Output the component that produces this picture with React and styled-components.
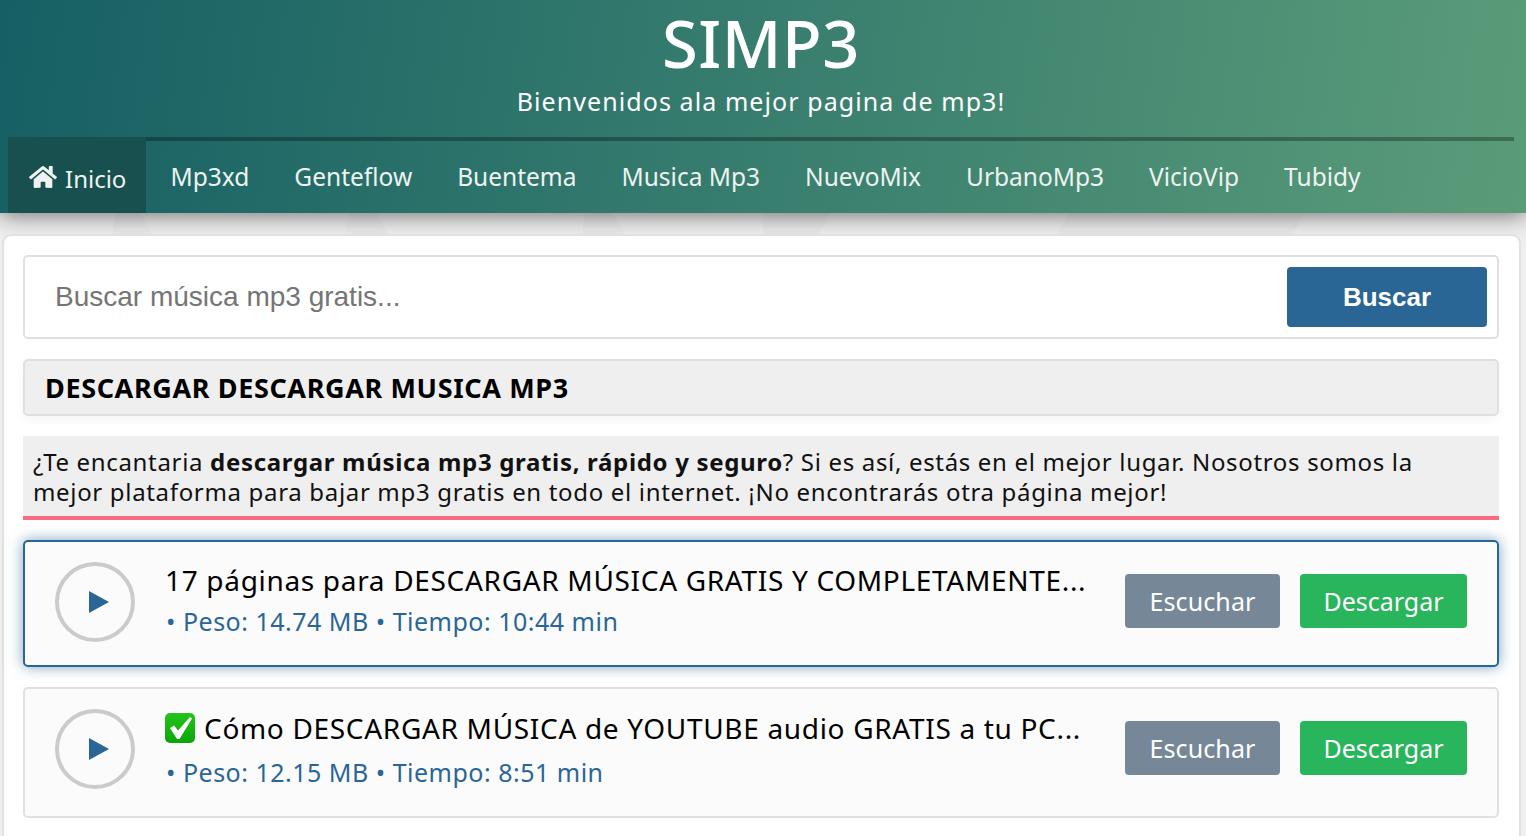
import React from 'react';
import styled, { createGlobalStyle } from 'styled-components';
import { FaHome } from 'react-icons/fa';

const GlobalStyle = createGlobalStyle`
  html, body {
    margin: 0;
    height: 836px;
    overflow: hidden;
    background: #efefef;
  }
  * { box-sizing: border-box; }
`;

const Header = styled.header`
  height: 213px;
  padding: 12px 12px 0 8px;
  background: linear-gradient(98deg, #165f64 0%, #5a9c79 100%);
  box-shadow: 0 2px 22px rgba(0, 0, 0, .55);
  position: relative;
  z-index: 0;
  font-family: "Noto Sans", sans-serif;
  color: #fff;
`;

const Logo = styled.h1`
  margin: 0;
  height: 62px;
  line-height: 62px;
  text-align: center;
  font-size: 65px;
  font-weight: 500;
  letter-spacing: .5px;
  font-family: "Noto Sans", sans-serif;
`;

const Tagline = styled.p`
  margin: 0;
  height: 63px;
  line-height: 32px;
  padding-top: 11px;
  text-align: center;
  font-size: 25px;
  letter-spacing: 1.08px;
`;

const Nav = styled.nav`
  display: flex;
  height: 76px;
  border-top: 4px solid rgba(0, 0, 0, .3);
`;

const NavItem = styled.a`
  display: flex;
  align-items: center;
  padding: 0 22.5px;
  font-size: 24.5px;
  line-height: 34px;
  color: #eef3f1;
`;

const ActiveItem = styled(NavItem)`
  gap: 8px;
  width: 138px;
  margin: -4px 2px 0 0;
  padding: 4px 0 0 21px;
  background: #17504f;
  font-size: 24px;
`;

const ActiveLabel = styled.span`
  padding-top: 3px;
`;

// faint hexagon tiles of the page background, only seen in the strip under the header
const Tiles = styled.svg`
  position: absolute;
  top: 213px;
  left: 0;
  z-index: 0;
`;

const Main = styled.main`
  position: relative;
  z-index: 1;
  margin: 21px 5px 0 2px;
  padding: 19px 20px 0 19px;
  height: 700px;
  background: #fff;
  border: 2px solid #e1e1e1;
  border-radius: 9px;
`;

const SearchBox = styled.form`
  display: flex;
  align-items: center;
  justify-content: space-between;
  height: 84px;
  padding: 0 10px 0 30px;
  border: 2px solid #e0e0e0;
  border-radius: 5px;
`;

const Placeholder = styled.span`
  font-family: "Liberation Sans", sans-serif;
  font-size: 28px;
  color: #757575;
`;

const SearchButton = styled.button`
  width: 200px;
  height: 60px;
  border: 0;
  border-radius: 4px;
  background: #2a6695;
  color: #fff;
  font-family: "Liberation Sans", sans-serif;
  font-size: 26px;
  font-weight: 700;
`;

const Title = styled.h2`
  display: flex;
  align-items: center;
  height: 57px;
  margin: 20px 0;
  padding-left: 20px;
  border: 2px solid #e0e0e0;
  border-radius: 5px;
  background: #efefef;
  box-shadow: 0 4px 10px rgba(0, 0, 0, .04);
  color: #000;
  font-family: "Noto Sans", sans-serif;
  font-size: 27px;
  font-weight: 700;
  letter-spacing: .63px;
`;

const Intro = styled.p`
  margin: 0 0 20px;
  height: 84px;
  padding: 11px 60px 0 10px;
  background: #efefef;
  border-bottom: 4px solid #fb6b7e;
  color: #111;
  font-family: "Noto Sans", sans-serif;
  font-size: 24px;
  letter-spacing: .67px;
  line-height: 30px;
`;

const Card = styled.article`
  display: flex;
  align-items: center;
  height: ${p => (p.$active ? '127px' : '131px')};
  margin-bottom: 20px;
  padding: 0 30px ${p => (p.$active ? '6px' : '9px')};
  background: #fbfbfb;
  border: 2px solid ${p => (p.$active ? '#2a6695' : '#e0e0e0')};
  border-radius: 5px;
  box-shadow: ${p => (p.$active ? '0 0 14px rgba(42, 102, 149, .6)' : 'none')};
  font-family: "Noto Sans", sans-serif;
`;

const PlayButton = styled.div`
  flex: none;
  display: flex;
  align-items: center;
  justify-content: center;
  width: 80px;
  height: 80px;
  padding-left: 8px;
  border: 4px solid #cbcbcb;
  border-radius: 50%;
  margin: 2px 31px 0 0;
`;

const Info = styled.div`
  flex: 1;
  min-width: 0;
  padding: ${p => (p.$check ? '2px 0 0' : '0 0 3px')};
`;

const SongTitle = styled.div`
  display: flex;
  align-items: center;
  gap: 9px;
  margin-left: -1px;
  font-size: 28px;
  letter-spacing: .68px;
  line-height: 36px;
  color: #000;
`;

const TitleText = styled.span`
  flex: 1;
  min-width: 0;
  white-space: nowrap;
`;

const Meta = styled.div`
  margin-top: ${p => (p.$check ? '10px' : '7px')};
  font-size: 25px;
  letter-spacing: .5px;
  line-height: 32px;
  color: #2a6695;
`;

const Actions = styled.div`
  flex: none;
  display: flex;
  gap: 20px;
  margin-left: 38px;
`;

const ActionButton = styled.button`
  height: 54px;
  width: ${p => (p.$green ? '167px' : '155px')};
  border: 0;
  border-radius: 4px;
  background: ${p => (p.$green ? '#29b55c' : '#768898')};
  color: #fff;
  font-family: "Noto Sans", sans-serif;
  font-size: 25px;
  letter-spacing: ${p => (p.$green ? '0' : '.1px')};
`;

const navLinks = ['Mp3xd', 'Genteflow', 'Buentema', 'Musica Mp3', 'NuevoMix', 'UrbanoMp3', 'VicioVip', 'Tubidy'];

const PlayIcon = () => (
  <svg width="20" height="22" viewBox="0 0 20 22">
    <path d="M0 0 L20 11 L0 22 Z" fill="#2a6695" />
  </svg>
);

const CheckIcon = () => (
  <svg width="30" height="30" viewBox="0 0 30 30">
    <defs>
      <linearGradient id="checkFill" x1="0" y1="0" x2="0" y2="1">
        <stop offset="0" stopColor="#25c41c" />
        <stop offset="1" stopColor="#0ba50a" />
      </linearGradient>
    </defs>
    <rect width="30" height="30" rx="5" fill="url(#checkFill)" />
    <path d="M5 15 L9 12.5 L13 17.5 L25 4 L27 5.5 L14.5 26 L12 26 Z" fill="#fff" />
  </svg>
);

const songs = [
  { title: '17 páginas para DESCARGAR MÚSICA GRATIS Y COMPLETAMENTE...', meta: '• Peso: 14.74 MB • Tiempo: 10:44 min', active: true },
  { title: 'Cómo DESCARGAR MÚSICA de YOUTUBE audio GRATIS a tu PC...', meta: '• Peso: 12.15 MB • Tiempo: 8:51 min', check: true },
];

export default function App() {
  return (
    <>
      <GlobalStyle />
      <Tiles width="1526" height="21" viewBox="0 213 1526 21">
        <g fill="rgba(0,0,0,.02)">
          <polygon points="115,213 141,213 152,234 112,234" />
          <polygon points="350,213 377,213 388,234 345,234" />
          <polygon points="585,213 613,213 625,234 582,234" />
          <polygon points="763,213 831,213 819,234 763,234" />
          <polygon points="1069,213 1305,213 1293,234 1057,234" />
        </g>
      </Tiles>
      <Header>
        <Logo>SIMP3</Logo>
        <Tagline>Bienvenidos ala mejor pagina de mp3!</Tagline>
        <Nav>
          <ActiveItem><FaHome size={28} /><ActiveLabel>Inicio</ActiveLabel></ActiveItem>
          {navLinks.map(l => <NavItem key={l}>{l}</NavItem>)}
        </Nav>
      </Header>
      <Main>
        <SearchBox>
          <Placeholder>Buscar música mp3 gratis...</Placeholder>
          <SearchButton type="button">Buscar</SearchButton>
        </SearchBox>
        <Title>DESCARGAR DESCARGAR MUSICA MP3</Title>
        <Intro>
          ¿Te encantaria <b>descargar música mp3 gratis, rápido y seguro</b>? Si es así, estás en el mejor lugar. Nosotros somos la mejor plataforma para bajar mp3 gratis en todo el internet. ¡No encontrarás otra página mejor!
        </Intro>
        {songs.map(s => (
          <Card key={s.title} $active={s.active}>
            <PlayButton><PlayIcon /></PlayButton>
            <Info $check={s.check}>
              <SongTitle>
                {s.check && <CheckIcon />}
                <TitleText>{s.title}</TitleText>
              </SongTitle>
              <Meta $check={s.check}>{s.meta}</Meta>
            </Info>
            <Actions>
              <ActionButton type="button">Escuchar</ActionButton>
              <ActionButton type="button" $green>Descargar</ActionButton>
            </Actions>
          </Card>
        ))}
      </Main>
    </>
  );
}
